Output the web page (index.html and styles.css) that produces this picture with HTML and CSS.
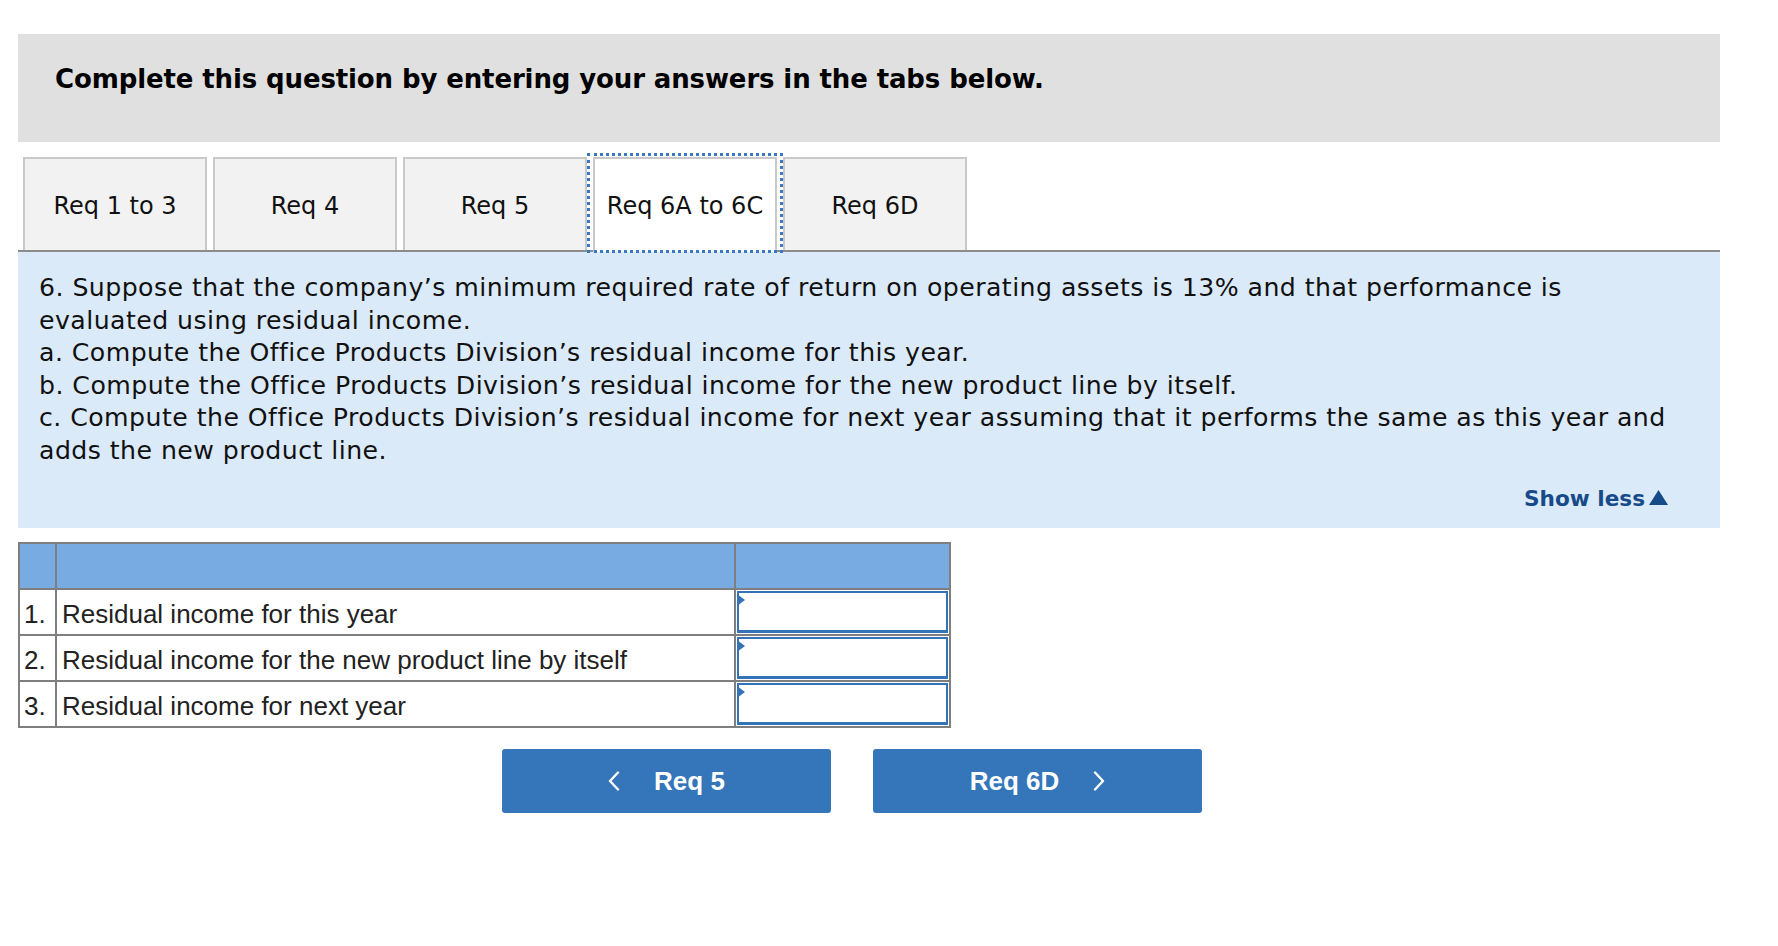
FILE: index.html
```
<!DOCTYPE html>
<html lang="en">
<head>
<meta charset="utf-8">
<title>Req 6A to 6C</title>
<link rel="stylesheet" href="styles.css">
</head>
<body>
<div class="page">
  <div class="banner">Complete this question by entering your answers in the tabs below.</div>

  <div class="tabs">
    <div class="tab">Req 1 to 3</div>
    <div class="tab">Req 4</div>
    <div class="tab">Req 5</div>
    <div class="tab active">Req 6A to 6C</div>
    <div class="tab">Req 6D</div>
  </div>

  <div class="prompt">
    <p class="qtext">6. Suppose that the company’s minimum required rate of return on operating assets is 13% and that performance is evaluated using residual income.<br>a. Compute the Office Products Division’s residual income for this year.<br>b. Compute the Office Products Division’s residual income for the new product line by itself.<br>c. Compute the Office Products Division’s residual income for next year assuming that it performs the same as this year and adds the new product line.</p>
    <div class="toggle"><span class="toggle-label">Show less</span><svg class="tri" width="19" height="15" viewBox="0 0 19 15"><polygon points="9.5,0 19,15 0,15" fill="#174a88"/></svg></div>
  </div>

  <table class="answers">
    <colgroup>
      <col class="c-num">
      <col class="c-label">
      <col class="c-input">
    </colgroup>
    <tr class="head">
      <th></th><th></th><th></th>
    </tr>
    <tr>
      <td class="num">1.</td>
      <td class="label">Residual income for this year</td>
      <td class="cell"><div class="input"></div></td>
    </tr>
    <tr>
      <td class="num">2.</td>
      <td class="label">Residual income for the new product line by itself</td>
      <td class="cell"><div class="input"></div></td>
    </tr>
    <tr>
      <td class="num">3.</td>
      <td class="label">Residual income for next year</td>
      <td class="cell"><div class="input"></div></td>
    </tr>
  </table>

  <div class="nav">
    <button class="navbtn"><svg class="chev" width="12" height="20" viewBox="0 0 12 20"><polyline points="10,1.5 2,10 10,18.5" fill="none" stroke="#fff" stroke-width="2.4" stroke-linecap="round" stroke-linejoin="round"/></svg><span>Req 5</span></button>
    <button class="navbtn"><span>Req 6D</span><svg class="chev" width="12" height="20" viewBox="0 0 12 20"><polyline points="2,1.5 10,10 2,18.5" fill="none" stroke="#fff" stroke-width="2.4" stroke-linecap="round" stroke-linejoin="round"/></svg></button>
  </div>
</div>
</body>
</html>
```

FILE: styles.css
```
* {
  box-sizing: border-box;
}

html, body {
  margin: 0;
  padding: 0;
  background: #ffffff;
}

body {
  font-family: "DejaVu Sans", Verdana, sans-serif;
  color: #111111;
}

.page {
  width: 1702px;
  margin: 0 0 0 18px;
  padding-top: 34px;
}

.banner {
  background: #e0e0e0;
  height: 108px;
  padding: 30px 37px 0 37px;
  font-size: 26px;
  font-weight: bold;
  line-height: 30px;
  letter-spacing: -0.12px;
  color: #000000;
}

.tabs {
  display: flex;
  align-items: flex-start;
  gap: 6px;
  margin-top: 15px;
  padding-left: 5px;
  height: 95px;
  border-bottom: 2px solid #8c8c8c;
}

.tab {
  width: 184px;
  height: 93px;
  display: flex;
  align-items: center;
  justify-content: center;
  background: #f2f2f2;
  border: 2px solid #c9c9c9;
  border-bottom: none;
  font-size: 24px;
  color: #111111;
  padding-top: 2px;
}

.tab.active {
  position: relative;
  background: #ffffff;
  height: 95px;
  padding-bottom: 2px;
}

.tab.active::after {
  content: "";
  position: absolute;
  top: -6px;
  left: -8px;
  right: -8px;
  bottom: -1px;
  border: 3px dotted #3a78c2;
  pointer-events: none;
}

.prompt {
  background: #dbeaf8;
  padding: 20px 40px 17px 21px;
}

.qtext {
  margin: 0;
  font-size: 25.2px;
  letter-spacing: 0.45px;
  line-height: 32.5px;
  color: #111111;
}

.toggle {
  display: flex;
  justify-content: flex-end;
  align-items: center;
  gap: 4px;
  margin-top: 18px;
  margin-right: -19px;
  padding-right: 31px;
  height: 26px;
  color: #174a88;
  font-size: 21.6px;
  font-weight: bold;
}

.tri {
  display: block;
  margin-top: -1px;
}

.answers {
  margin-top: 14px;
  width: 933px;
  border-collapse: collapse;
  border: 2px solid #7f7f7f;
  font-family: "Liberation Sans", Arial, sans-serif;
  font-size: 26px;
  color: #222222;
}

.c-num {
  width: 37px;
}

.c-label {
  width: 680px;
}

.c-input {
  width: 216px;
}

.answers th,
.answers td {
  border: 2px solid #7f7f7f;
  padding: 0;
}

.answers tr {
  height: 46px;
}

.answers .head th {
  background: #77abe1;
}

.answers .num {
  padding: 4px 0 0 4px;
  text-align: left;
}

.answers .label {
  padding: 4px 0 0 5px;
}

.answers .cell {
  padding: 1px;
}

.input {
  position: relative;
  height: 42px;
  background: #ffffff;
  border: 2px solid #3573b8;
  border-bottom-width: 3px;
}

.input::before {
  content: "";
  position: absolute;
  top: 1px;
  left: -2px;
  width: 0;
  height: 0;
  border-top: 6px solid transparent;
  border-bottom: 6px solid transparent;
  border-left: 8px solid #3573b8;
}

.nav {
  display: flex;
  gap: 42px;
  margin-top: 21px;
  padding-left: 484px;
}

.navbtn {
  width: 329px;
  height: 64px;
  display: flex;
  align-items: center;
  justify-content: center;
  gap: 34px;
  background: #3575b9;
  border: none;
  border-radius: 3px;
  color: #ffffff;
  font-family: "Liberation Sans", Arial, sans-serif;
  font-size: 26px;
  font-weight: bold;
  padding: 0;
}

.chev {
  display: block;
}
```
